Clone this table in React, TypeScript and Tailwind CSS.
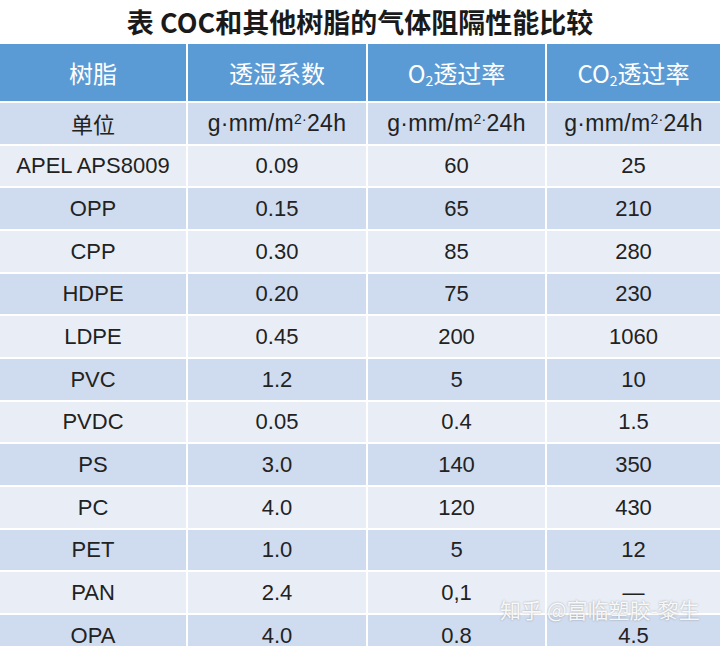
import React from "react";

const rows: [string, string, string, string][] = [
  ["APEL APS8009", "0.09", "60", "25"],
  ["OPP", "0.15", "65", "210"],
  ["CPP", "0.30", "85", "280"],
  ["HDPE", "0.20", "75", "230"],
  ["LDPE", "0.45", "200", "1060"],
  ["PVC", "1.2", "5", "10"],
  ["PVDC", "0.05", "0.4", "1.5"],
  ["PS", "3.0", "140", "350"],
  ["PC", "4.0", "120", "430"],
  ["PET", "1.0", "5", "12"],
  ["PAN", "2.4", "0,1", "—"],
  ["OPA", "4.0", "0.8", "4.5"],
];

const font = { fontFamily: '"Liberation Sans", Arial, "Noto Sans CJK SC", sans-serif' };

function Unit() {
  return (
    <span className="text-[23px] tracking-[0.3px]">
      g·mm/m<span className="relative top-[-7px] text-[14px]">2·</span>24h
    </span>
  );
}

export default function App() {
  return (
    <div className="w-[720px] h-[646px] overflow-hidden bg-white relative" style={font}>
      <div
        className="h-[44px] flex items-center justify-center text-[27px] font-bold text-[#1a1a1a]"
        style={{ fontFamily: '"Noto Sans CJK SC", "Liberation Sans", sans-serif' }}
      >
        表 COC和其他树脂的气体阻隔性能比较
      </div>
      <div className="grid grid-cols-[186px_178px_177px_1fr] gap-[2px] bg-white">
        {[
          <span key="a">树脂</span>,
          <span key="b">透湿系数</span>,
          <span key="c">O<sub className="text-[14px]">2</sub>透过率</span>,
          <span key="d">CO<sub className="text-[14px]">2</sub>透过率</span>,
        ].map((c, i) => (
          <div
            key={i}
            className="h-[57px] bg-[#5b9bd5] flex items-center justify-center text-white text-[24px]"
            style={{ fontFamily: '"Noto Sans CJK SC", sans-serif' }}
          >
            {c}
          </div>
        ))}
        <div className="h-[40.67px] bg-[#cfdbee] flex items-center justify-center text-[22px] text-[#222222]" style={{ fontFamily: '"Noto Sans CJK SC", sans-serif' }}>
          单位
        </div>
        {[0, 1, 2].map((i) => (
          <div key={i} className="h-[40.67px] bg-[#cfdbee] flex items-center justify-center text-[22px] text-[#222222]">
            <Unit />
          </div>
        ))}
        {rows.map((r, ri) =>
          r.map((c, ci) => (
            <div
              key={ri + "-" + ci}
              className={
                "h-[40.67px] flex items-center justify-center text-[22px] text-[#222222] " +
                (ri % 2 === 0 ? "bg-[#e9eef6]" : "bg-[#cfdbee]")
              }
            >
              {c}
            </div>
          ))
        )}
      </div>
      <div
        className="absolute left-[500px] top-[594px] text-[21px] text-white/90 whitespace-nowrap"
        style={{ fontFamily: '"Noto Sans CJK SC", sans-serif', textShadow: "0 0 2px rgba(0,0,0,0.35)" }}
      >
        知乎 @富临塑胶-黎生
      </div>
    </div>
  );
}
